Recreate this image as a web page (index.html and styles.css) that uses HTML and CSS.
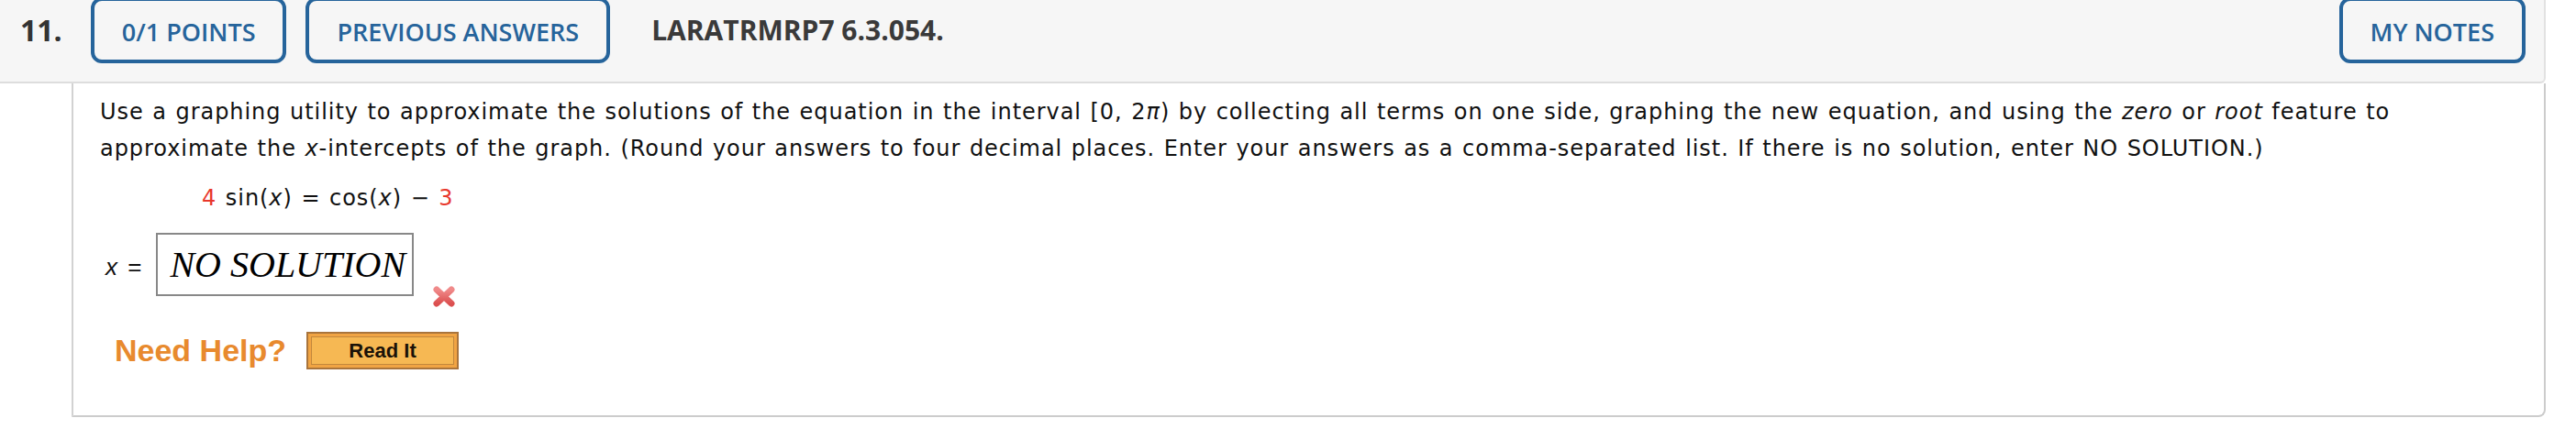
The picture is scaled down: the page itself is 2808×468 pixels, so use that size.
FILE: index.html
```html
<!DOCTYPE html>
<html>
<head>
<meta charset="utf-8">
<link rel="stylesheet" href="styles.css">
</head>
<body>
<div class="question">
  <div class="qhead">
    <span class="qnum">11.</span>
    <span class="pill pill-points">0/1 POINTS</span>
    <span class="pill pill-prev">PREVIOUS ANSWERS</span>
    <span class="qtitle">LARATRMRP7 6.3.054.</span>
    <span class="spacer"></span>
    <span class="pill">MY NOTES</span>
  </div>
  <div class="qbody">
    <p class="prompt">Use a graphing utility to approximate the solutions of the equation in the interval [0, 2<i class="pi">π</i>) by collecting all terms on one side, graphing the new equation, and using the <i>zero</i> or <i>root</i> feature to approximate the <i>x</i>-intercepts of the graph. (Round your answers to four decimal places. Enter your answers as a comma-separated list. If there is no solution, enter NO SOLUTION.)</p>
    <div class="eq"><span class="red">4</span> sin(<i>x</i>) = cos(<i>x</i>) − <span class="red">3</span></div>
    <div class="answer">
      <span class="avar"><i>x</i> =</span>
      <span class="abox">NO SOLUTION</span>
      <svg class="wrong" width="26" height="25" viewBox="0 0 26 25">
        <defs>
          <linearGradient id="xg" x1="0" y1="0" x2="0" y2="1">
            <stop offset="0" stop-color="#f08a8a"/>
            <stop offset="1" stop-color="#dc5050"/>
          </linearGradient>
        </defs>
        <path d="M5 5 L21 20 M21 5 L5 20" stroke="url(#xg)" stroke-width="7" stroke-linecap="round"/>
      </svg>
    </div>
    <div class="help">
      <span class="needhelp">Need Help?</span>
      <span class="readit"><span class="readit-in">Read It</span></span>
    </div>
  </div>
</div>
</body>
</html>
```

FILE: styles.css
```css
html, body {
  margin: 0;
  padding: 0;
  background: #ffffff;
}

.question {
  width: 2775px;
}

.qhead {
  box-sizing: border-box;
  height: 91px;
  display: flex;
  align-items: flex-start;
  padding: 0 20px 0 22px;
  background: #f6f6f6;
  border-bottom: 2px solid #dddddd;
  border-right: 2px solid #e2e2e2;
  border-bottom-right-radius: 6px;
  font-family: "Open Sans", "Liberation Sans", sans-serif;
}

.qnum {
  font-size: 32px;
  font-weight: 700;
  color: #333333;
  line-height: 66px;
  margin-right: 31px;
}

.pill {
  box-sizing: border-box;
  height: 72px;
  margin-top: -3px;
  display: flex;
  align-items: center;
  padding: 3px 30px 0;
  border: 4px solid #26649b;
  border-radius: 12px;
  font-size: 27px;
  font-weight: 600;
  line-height: 40px;
  color: #26649b;
}

.pill-points {
  margin-right: 21px;
}

.pill-prev {
  margin-right: 45px;
}

.qtitle {
  font-size: 30px;
  font-weight: 700;
  color: #3a3a3a;
  line-height: 66px;
}

.spacer {
  flex: 1;
}

.qbody {
  margin-left: 78px;
  border-left: 2px solid #d2d2d2;
  border-right: 2px solid #cccccc;
  border-bottom: 2px solid #cccccc;
  border-bottom-right-radius: 8px;
  padding: 11px 29px 50px 29px;
  font-family: Verdana, "DejaVu Sans", sans-serif;
  font-size: 24px;
  letter-spacing: 0.95px;
  word-spacing: 1px;
  color: #111111;
}

.prompt {
  margin: 0;
  line-height: 40px;
}

.eq {
  margin: 14px 0 0 111px;
  line-height: 40px;
}

.red {
  color: #e8372c;
}

.answer {
  display: flex;
  align-items: flex-end;
  margin-top: 18px;
  margin-left: 6px;
}

.avar {
  font-family: "Liberation Sans", Arial, sans-serif;
  font-size: 26px;
  letter-spacing: 0;
  word-spacing: 4px;
  align-self: center;
  margin-top: 6px;
  margin-right: 16px;
}

.abox {
  box-sizing: border-box;
  width: 281px;
  height: 69px;
  border: 2px solid #888888;
  padding: 0 0 0 13px;
  font-family: "Liberation Serif", "Times New Roman", serif;
  font-style: italic;
  font-size: 40px;
  letter-spacing: 0;
  word-spacing: 0;
  line-height: 65px;
  color: #000000;
}

.wrong {
  display: block;
  margin-left: 20px;
  margin-bottom: -13px;
}

.help {
  display: flex;
  align-items: center;
  margin-top: 39px;
  margin-left: 16px;
  letter-spacing: 0;
  word-spacing: 0;
}

.needhelp {
  font-family: "Liberation Sans", Arial, sans-serif;
  font-weight: 700;
  font-size: 34px;
  color: #e88a2e;
  margin-right: 22px;
}

.readit {
  box-sizing: border-box;
  width: 166px;
  height: 41px;
  border: 2px solid #a9743c;
  background: #f1a443;
  padding: 3px;
  display: flex;
}

.readit-in {
  flex: 1;
  border: 1px solid #c2873c;
  background: #f6b853;
  display: flex;
  align-items: center;
  justify-content: center;
  font-family: "Liberation Sans", Arial, sans-serif;
  font-weight: 700;
  font-size: 22px;
  color: #1a1208;
}
```
